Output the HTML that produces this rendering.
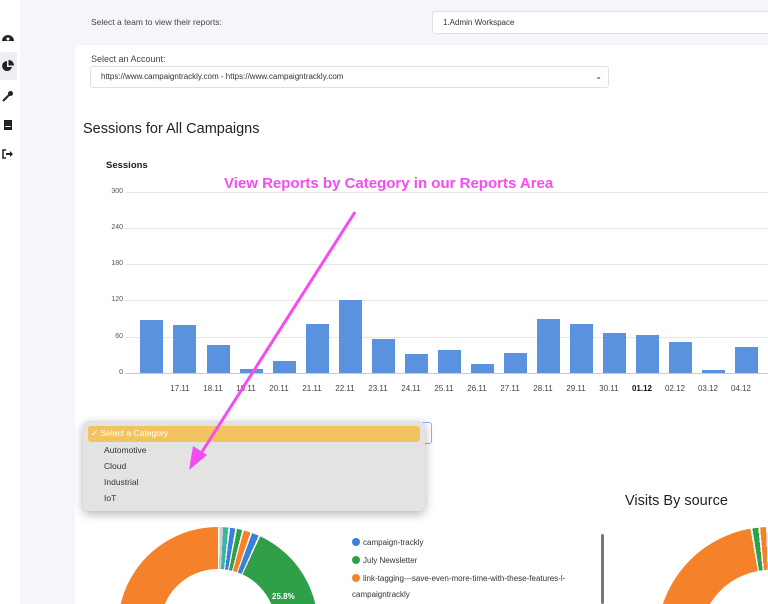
<!DOCTYPE html>
<html><head><meta charset="utf-8"><style>
*{margin:0;padding:0;box-sizing:border-box}
html,body{width:768px;height:604px;overflow:hidden}
body{background:#f4f6fa;font-family:"Liberation Sans",sans-serif;color:#333}
#w{position:relative;width:768px;height:604px;overflow:hidden}
.a{position:absolute}
.side{left:0;top:0;width:20px;height:604px;background:#fff}
.ic{left:1px;width:14px;height:12px}
.main{left:75px;top:45px;width:693px;height:559px;background:#fff}
.sel{border:1px solid #dde1e6;border-radius:3px;background:#fff;font-size:8px;color:#333;padding-left:10px;line-height:20px}
.grid{left:125px;width:643px;height:1px;background:#e6e6e6}
.yl{left:100px;width:23px;text-align:right;font-size:7px;color:#555}
.bar{background:#5a92e0;width:23px}
.xl{font-size:8px;color:#444;width:34px;text-align:center;top:384px}
.it{left:104px;font-size:8.5px;color:#333}
.lg{left:352px;font-size:8px;color:#333}
.dot{display:inline-block;width:8px;height:8px;border-radius:50%;margin-right:3px;vertical-align:-1px}
</style></head><body><div id="w">
<div class="a side"></div>
<div class="a" style="left:0;top:52px;width:17px;height:28px;background:#eceef1;border-radius:2px"></div>
<svg class="a ic" style="top:31px" viewBox="0 0 14 12"><path d="M1 10A6 6 0 0 1 13 10Z" fill="#222"/><circle cx="7" cy="8" r="1.5" fill="#fff"/></svg>
<svg class="a ic" style="top:60px" viewBox="0 0 14 12"><path d="M6 1A5 5 0 1 0 11 7H6Z" fill="#222"/><path d="M7.5 0V5.5H13A5.5 5.5 0 0 0 7.5 0Z" fill="#222"/></svg>
<svg class="a ic" style="top:90px" viewBox="0 0 14 12"><path d="M2 11L8 5" stroke="#222" stroke-width="2"/><circle cx="9.5" cy="3.5" r="2.5" fill="#222"/></svg>
<svg class="a ic" style="top:119px" viewBox="0 0 14 12"><rect x="3" y="1" width="8" height="10" fill="#222"/><rect x="4.5" y="7" width="5" height="1" fill="#fff"/></svg>
<svg class="a ic" style="top:148px" viewBox="0 0 14 12"><path d="M5 2H2V10H5" stroke="#222" stroke-width="1.5" fill="none"/><path d="M5 5H9V3L12 6L9 9V7H5Z" fill="#222"/></svg>
<div class="a" style="left:91px;top:17px;font-size:8.5px;color:#444">Select a team to view their reports:</div>
<div class="a sel" style="left:432px;top:11px;width:340px;height:23px;line-height:21px">1.Admin Workspace</div>
<div class="a main"></div>
<div class="a" style="left:91px;top:54px;font-size:9px;color:#444">Select an Account:</div>
<div class="a sel" style="left:90px;top:66px;width:519px;height:22px">https://www.campaigntrackly.com - https://www.campaigntrackly.com<span style="position:absolute;right:6px;top:0;font-size:8px">⌄</span></div>
<div class="a" style="left:83px;top:121px;font-size:14.5px;color:#222">Sessions for All Campaigns</div>
<div class="a" style="left:106px;top:160px;font-size:9.5px;font-weight:bold;color:#222">Sessions</div>
<div class="a grid" style="top:192px"></div><div class="a yl" style="top:188px">300</div>
<div class="a grid" style="top:228px"></div><div class="a yl" style="top:224px">240</div>
<div class="a grid" style="top:264px"></div><div class="a yl" style="top:260px">180</div>
<div class="a grid" style="top:300px"></div><div class="a yl" style="top:296px">120</div>
<div class="a grid" style="top:337px"></div><div class="a yl" style="top:333px">60</div>
<div class="a grid" style="top:373px;background:#ccc"></div><div class="a yl" style="top:369px">0</div>
<div class="a bar" style="left:140px;top:320px;height:53px"></div>
<div class="a bar" style="left:173px;top:325px;height:48px"></div>
<div class="a bar" style="left:207px;top:345px;height:28px"></div>
<div class="a bar" style="left:240px;top:369px;height:4px"></div>
<div class="a bar" style="left:273px;top:361px;height:12px"></div>
<div class="a bar" style="left:306px;top:324px;height:49px"></div>
<div class="a bar" style="left:339px;top:300px;height:73px"></div>
<div class="a bar" style="left:372px;top:339px;height:34px"></div>
<div class="a bar" style="left:405px;top:354px;height:19px"></div>
<div class="a bar" style="left:438px;top:350px;height:23px"></div>
<div class="a bar" style="left:471px;top:364px;height:9px"></div>
<div class="a bar" style="left:504px;top:353px;height:20px"></div>
<div class="a bar" style="left:537px;top:319px;height:54px"></div>
<div class="a bar" style="left:570px;top:324px;height:49px"></div>
<div class="a bar" style="left:603px;top:333px;height:40px"></div>
<div class="a bar" style="left:636px;top:335px;height:38px"></div>
<div class="a bar" style="left:669px;top:342px;height:31px"></div>
<div class="a bar" style="left:702px;top:370px;height:3px"></div>
<div class="a bar" style="left:735px;top:347px;height:26px"></div>
<div class="a xl" style="left:163px">17.11</div><div class="a xl" style="left:196px">18.11</div><div class="a xl" style="left:229px">19.11</div><div class="a xl" style="left:262px">20.11</div><div class="a xl" style="left:295px">21.11</div><div class="a xl" style="left:328px">22.11</div><div class="a xl" style="left:361px">23.11</div><div class="a xl" style="left:394px">24.11</div><div class="a xl" style="left:427px">25.11</div><div class="a xl" style="left:460px">26.11</div><div class="a xl" style="left:493px">27.11</div><div class="a xl" style="left:526px">28.11</div><div class="a xl" style="left:559px">29.11</div><div class="a xl" style="left:592px">30.11</div><div class="a xl" style="left:625px;font-weight:bold;color:#111">01.12</div><div class="a xl" style="left:658px">02.12</div><div class="a xl" style="left:691px">03.12</div><div class="a xl" style="left:724px">04.12</div><div class="a xl" style="left:757px">0</div>
<!-- donuts -->
<div class="a" style="left:118px;top:527px;width:200px;height:200px;border-radius:50%;background:conic-gradient(#fff 0 1deg,#ccc 1deg 3deg,#3ab5a0 3deg 6deg,#fff 6deg 7deg,#3a7fd8 7deg 10deg,#fff 10deg 11deg,#30a048 11deg 14deg,#fff 14deg 15deg,#f5822a 15deg 19deg,#fff 19deg 20deg,#3a7fd8 20deg 24deg,#fff 24deg 25deg,#30a048 25deg 150deg,#f5822a 150deg 360deg)"></div>
<div class="a" style="left:160px;top:569px;width:116px;height:116px;border-radius:50%;background:#fff"></div>
<div class="a" style="left:272px;top:592px;font-size:8px;font-weight:bold;color:#fff">25.8%</div>
<div class="a" style="left:657px;top:527px;width:226px;height:226px;border-radius:50%;background:conic-gradient(#f5822a 0 350deg,#fff 350deg 351deg,#30a048 351deg 354deg,#fff 354deg 355deg,#f5822a 355deg 358deg,#fff 358deg 360deg)"></div>
<div class="a" style="left:700px;top:570px;width:140px;height:140px;border-radius:50%;background:#fff"></div>
<div class="a" style="left:625px;top:493px;font-size:14.5px;color:#222">Visits By source</div>
<div class="a" style="left:601px;top:534px;width:3px;height:70px;background:#777;border-radius:2px"></div>
<div class="a lg" style="top:538px"><span class="dot" style="background:#3a7fd8"></span>campaign-trackly</div>
<div class="a lg" style="top:556px"><span class="dot" style="background:#30a048"></span>July Newsletter</div>
<div class="a lg" style="top:574px"><span class="dot" style="background:#f5822a"></span>link-tagging---save-even-more-time-with-these-features-l-</div>
<div class="a lg" style="top:590px">campaigntrackly</div>
<!-- dropdown -->
<div class="a" style="left:410px;top:422px;width:22px;height:22px;border:1px solid #8ab4f0;border-radius:3px;background:#fff"></div>
<div class="a" style="left:83px;top:421px;width:342px;height:90px;background:#e3e3e3;border-radius:6px;box-shadow:0 3px 10px rgba(0,0,0,.3)"></div>
<div class="a" style="left:88px;top:426px;width:332px;height:16px;background:#f2c460;border-radius:3px"></div>
<div class="a" style="left:91px;top:428px;font-size:8.5px;color:#fff">✓ Select a Category</div>
<div class="a it" style="top:445px">Automotive</div>
<div class="a it" style="top:461px">Cloud</div>
<div class="a it" style="top:477px">Industrial</div>
<div class="a it" style="top:493px">IoT</div>
<!-- annotation -->
<div class="a" style="left:224px;top:175px;font-size:15px;font-weight:bold;color:#f54cf0">View Reports by Category in our Reports Area</div>
<svg class="a" style="left:0;top:0" width="768" height="604"><line x1="355" y1="212" x2="200" y2="455" stroke="#f54cf0" stroke-width="3"/><polygon points="189,470 193,446 207,455" fill="#f54cf0"/></svg>
</div></body></html>
